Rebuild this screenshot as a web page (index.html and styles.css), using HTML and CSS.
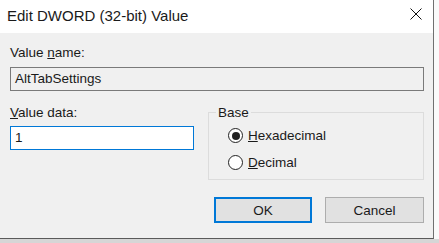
FILE: index.html
```html
<!DOCTYPE html>
<html lang="en">
  <head>
    <meta charset="UTF-8" />
    <title>Edit DWORD (32-bit) Value</title>
    <link rel="stylesheet" href="styles.css">
  </head>
  <body>
    <div class="dialog">
      <div class="titlebar">
        <span class="title">Edit DWORD (32-bit) Value</span>
        <svg class="close" width="12" height="12" viewBox="0 0 12 12">
          <path d="M0.5 0.5 L11.5 11.5 M11.5 0.5 L0.5 11.5" stroke="#111" stroke-width="1" fill="none" />
        </svg>
      </div>

      <div class="content">
        <div class="label">Value <u>n</u>ame:</div>
        <div class="namebox">AltTabSettings</div>

        <div class="row">
          <div class="datacol">
            <div class="label"><u>V</u>alue data:</div>
            <div class="databox">1</div>
          </div>

          <fieldset class="base">
            <legend>Base</legend>
            <div class="radio-row">
              <span class="radio checked"></span>
              <span><u>H</u>exadecimal</span>
            </div>
            <div class="radio-row">
              <span class="radio"></span>
              <span><u>D</u>ecimal</span>
            </div>
          </fieldset>
        </div>

        <div class="buttons">
          <button class="btn ok">OK</button>
          <button class="btn">Cancel</button>
        </div>
      </div>
    </div>
    <div class="under"></div>
  </body>
</html>
```

FILE: styles.css
```css
* {
  margin: 0;
  padding: 0;
  box-sizing: border-box;
}

body {
  background-color: #fafafa;
  font-family: "Liberation Sans", Arial, sans-serif;
  font-size: 13.5px;
  color: #1a1a1a;
  width: 439px;
  height: 243px;
  overflow: hidden;
}

.dialog {
  width: 434px;
  height: 239px;
  border-right: 1px solid #707070;
  border-bottom: 1px solid #5a5a5a;
  display: flex;
  flex-direction: column;
}

.titlebar {
  height: 33px;
  background-color: #fff;
  display: flex;
  justify-content: space-between;
  align-items: flex-start;
  padding: 7px 11px 0 7px;
}

.title {
  font-size: 15px;
  line-height: 17px;
}

.close {
  margin-top: 1px;
}

.content {
  flex: 1;
  background-color: #f0f0f0;
  padding: 12px 9px 0 10px;
}

.label {
  line-height: 15px;
}

.namebox {
  margin-top: 7px;
  height: 24px;
  border: 1px solid #7a7a7a;
  padding-left: 4px;
  line-height: 22px;
}

.row {
  display: flex;
  gap: 14px;
  margin-top: 14px;
}

.datacol {
  width: 184px;
}

.databox {
  margin-top: 6px;
  height: 24px;
  border: 1px solid #0078d7;
  background-color: #fff;
  padding-left: 4px;
  line-height: 22px;
}

.base {
  flex: 1;
  border: 1px solid #dcdcdc;
  padding: 8px 0 9px 19px;
  display: flex;
  flex-direction: column;
  gap: 12px;
}

.base legend {
  line-height: 15px;
  padding: 0 2px;
  margin-left: -12px;
}

.radio-row {
  display: flex;
  align-items: center;
  gap: 5px;
  height: 15px;
  line-height: 15px;
}

.radio {
  width: 15px;
  height: 15px;
  border: 1px solid #222;
  border-radius: 50%;
  background-color: #fff;
  display: flex;
  justify-content: center;
  align-items: center;
}

.radio.checked::after {
  content: "";
  width: 8px;
  height: 8px;
  border-radius: 50%;
  background-color: #222;
}

.buttons {
  display: flex;
  justify-content: flex-end;
  gap: 13px;
  margin-top: 17px;
}

.btn {
  width: 99px;
  height: 26px;
  background-color: #e1e1e1;
  border: 1px solid #adadad;
  font-family: inherit;
  font-size: 13.5px;
  color: #1a1a1a;
}

.btn.ok {
  width: 98px;
  border: 2px solid #0078d7;
}

.under {
  height: 4px;
  background-color: #d6d6d6;
}
```
